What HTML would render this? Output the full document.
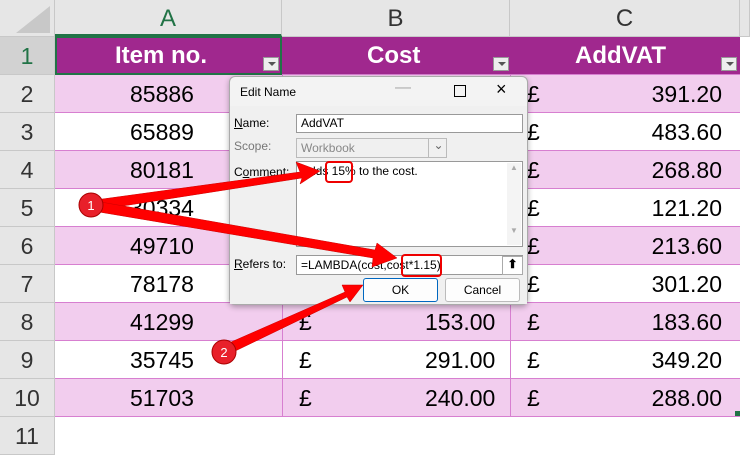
<!DOCTYPE html><html><head><style>
body{margin:0;width:750px;height:445px;overflow:hidden;background:#fff;font-family:"Liberation Sans",Arial,sans-serif;position:relative}
.a{position:absolute}
.colh{top:0;height:37px;background:#e6e6e6;border-right:1px solid #c8c8c8;border-bottom:1px solid #c8c8c8;font-size:24px;color:#333;text-align:center;line-height:37px;box-sizing:border-box}
.rowh{left:0;width:55px;height:38px;background:#e6e6e6;border-bottom:1px solid #c8c8c8;border-right:1px solid #c8c8c8;box-sizing:border-box;text-align:center;line-height:38px;font-size:23px;color:#333}
.row{left:55px;width:685px;height:38px;border-bottom:1px solid #d77fd0;box-sizing:border-box;font-size:23px;color:#000;line-height:38px}
.row span{position:absolute}
.hd span{color:#fff;font-weight:bold;font-size:24px}
.dd{width:16px;height:14px;background:#eee;border:1px solid #999;box-sizing:border-box;top:20px}
.dd:after{content:"";position:absolute;left:4px;top:4px;border:4px solid transparent;border-top:4px solid #555}
.dlg{left:229px;top:76px;width:299px;height:229px;background:#f3f3f3;border:1px solid #aaa;border-radius:6px;box-sizing:border-box;font-size:12px;color:#000;box-shadow:0 2px 6px rgba(0,0,0,.3)}
.dlg .a{font-size:12px}
.inp{background:#fff;border:1px solid #999;box-sizing:border-box;padding:2px 4px}
</style></head><body>
<div class="a colh" style="left:0;width:55px;background:#e6e6e6"></div>
<svg class="a" style="left:6px;top:6px" width="45" height="28"><polygon points="44,0 44,27 10,27" fill="#c8c8c8"/></svg>
<div class="a colh" style="left:55px;width:227px;color:#217346;border-bottom:3px solid #217346">A</div>
<div class="a colh" style="left:282px;width:228px">B</div>
<div class="a colh" style="left:510px;width:230px">C</div>
<div class="a colh" style="left:740px;width:10px"></div>

<div class="a rowh" style="top:37px;color:#217346;background:#d2d2d2">1</div>
<div class="a rowh" style="top:75px">2</div><div class="a rowh" style="top:113px">3</div><div class="a rowh" style="top:151px">4</div><div class="a rowh" style="top:189px">5</div><div class="a rowh" style="top:227px">6</div><div class="a rowh" style="top:265px">7</div><div class="a rowh" style="top:303px">8</div><div class="a rowh" style="top:341px">9</div><div class="a rowh" style="top:379px">10</div><div class="a rowh" style="top:417px">11</div>

<div class="a row hd" style="top:37px;background:#a0288e"><span style="left:60px">Item no.</span><span style="left:312px">Cost</span><span style="left:520px">AddVAT</span>
<div class="a dd" style="left:208px"></div><div class="a dd" style="left:438px"></div><div class="a dd" style="left:666px"></div></div>
<div class="a" style="left:55px;top:36px;width:227px;height:39px;border:2px solid #217346;box-sizing:border-box"></div>

<div class="a row" style="top:75px;background:#f2cdee"><span style="left:75px">85886</span><span style="left:472px">£</span><span style="right:18px">391.20</span></div>
<div class="a row" style="top:113px"><span style="left:75px">65889</span><span style="left:472px">£</span><span style="right:18px">483.60</span></div>
<div class="a row" style="top:151px;background:#f2cdee"><span style="left:75px">80181</span><span style="left:472px">£</span><span style="right:18px">268.80</span></div>
<div class="a row" style="top:189px"><span style="left:75px">30334</span><span style="left:472px">£</span><span style="right:18px">121.20</span></div>
<div class="a row" style="top:227px;background:#f2cdee"><span style="left:75px">49710</span><span style="left:472px">£</span><span style="right:18px">213.60</span></div>
<div class="a row" style="top:265px"><span style="left:75px">78178</span><span style="left:472px">£</span><span style="right:18px">301.20</span></div>
<div class="a row" style="top:303px;background:#f2cdee"><span style="left:75px">41299</span><span style="left:244px">£</span><span style="left:370px">153.00</span><span style="left:472px">£</span><span style="right:18px">183.60</span></div>
<div class="a row" style="top:341px"><span style="left:75px">35745</span><span style="left:244px">£</span><span style="left:370px">291.00</span><span style="left:472px">£</span><span style="right:18px">349.20</span></div>
<div class="a row" style="top:379px;background:#f2cdee"><span style="left:75px">51703</span><span style="left:244px">£</span><span style="left:370px">240.00</span><span style="left:472px">£</span><span style="right:18px">288.00</span></div>
<div class="a" style="left:282px;top:75px;width:1px;height:342px;background:#d77fd0"></div>
<div class="a" style="left:510px;top:75px;width:1px;height:342px;background:#d77fd0"></div>
<div class="a" style="left:735px;top:411px;width:5px;height:5px;background:#217346"></div>

<div class="a dlg">
<div class="a" style="left:10px;top:8px;font-size:12px">Edit Name</div>
<div class="a" style="left:165px;top:2px;font-size:16px;color:#aaa">—</div>
<div class="a" style="left:224px;top:8px;width:10px;height:10px;border:1px solid #000"></div>
<div class="a" style="left:266px;top:2px;font-size:18px">×</div>
<div class="a" style="left:0;top:29px;width:297px;height:198px;background:#f0f0f0"></div>
<div class="a" style="left:4px;top:39px"><u>N</u>ame:</div>
<div class="a inp" style="left:66px;top:37px;width:227px;height:19px;padding-top:1px">AddVAT</div>
<div class="a" style="left:4px;top:62px;color:#777">Scope:</div>
<div class="a inp" style="left:66px;top:61px;width:151px;height:20px;color:#888;background:#f0f0f0;border-color:#bbb">Workbook</div>
<div class="a" style="left:198px;top:61px;width:19px;height:20px;border-left:1px solid #bbb;color:#666;text-align:center">⌄</div>
<div class="a" style="left:4px;top:88px">C<u>o</u>mment:</div>
<div class="a inp" style="left:66px;top:84px;width:227px;height:86px">Adds 15% to the cost.</div>
<div class="a" style="left:277px;top:86px;width:14px;height:82px;background:#f4f4f4;color:#aaa;font-size:8px;text-align:center">▲<br><br><br><br><br><br><br>▼</div>
<div class="a" style="left:4px;top:180px"><u>R</u>efers to:</div>
<div class="a inp" style="left:66px;top:178px;width:227px;height:20px">=LAMBDA(cost,cost*1.15)</div>
<div class="a" style="left:272px;top:179px;width:19px;height:17px;background:#fff;border:1px solid #aaa;text-align:center;font-weight:bold">⬆</div>
<div class="a" style="left:133px;top:201px;width:73px;height:22px;border:1px solid #0067c0;background:#fdfdfd;text-align:center;line-height:22px;border-radius:3px">OK</div>
<div class="a" style="left:215px;top:201px;width:73px;height:22px;border:1px solid #bbb;background:#fdfdfd;text-align:center;line-height:22px;border-radius:3px">Cancel</div>
</div>
<div class="a" style="left:325px;top:161px;width:24px;height:18px;border:2px solid #e00;border-radius:4px"></div>
<div class="a" style="left:401px;top:254px;width:37px;height:19px;border:2px solid #e00;border-radius:4px"></div>

<svg class="a" style="left:0;top:0" width="750" height="445">
<g fill="#f00" stroke="#c00" stroke-width="0.5">
<polygon points="95,200 300,172 296,162 320,171 300,184 302,178 97,210"/>
<polygon points="95,201 375,250 377,243 397,258 372,267 373,258 93,211"/>
<polygon points="222,346 345,292 342,285 363,285 350,302 347,297 227,355"/>
</g>
<circle cx="91" cy="205" r="12" fill="#e8202a" stroke="#a00" stroke-width="1"/>
<text x="91" y="210" font-size="13" fill="#fff" text-anchor="middle" font-family="Liberation Sans">1</text>
<circle cx="224" cy="352" r="12" fill="#e8202a" stroke="#a00" stroke-width="1"/>
<text x="224" y="357" font-size="13" fill="#fff" text-anchor="middle" font-family="Liberation Sans">2</text>
</svg>
</body></html>
